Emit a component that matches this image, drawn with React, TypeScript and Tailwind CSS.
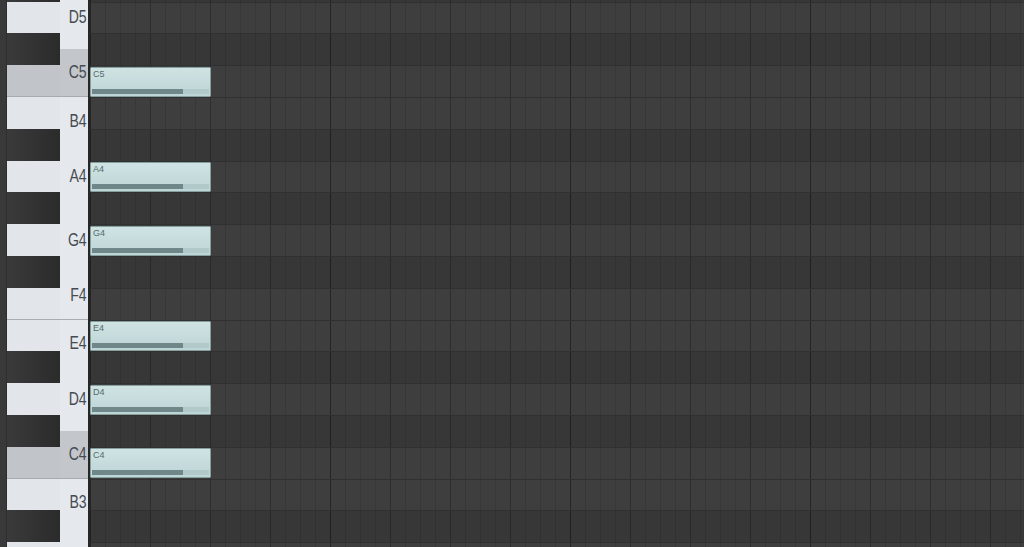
import React from "react";

const R = 31.8;
const rows = ["E5","D#5","D5","C#5","C5","B4","A#4","A4","G#4","G4","F#4","F4","E4","D#4","D4","C#4","C4","B3","A#3","A3"];
const whiteKeys = ["E5","D5","C5","B4","A4","G4","F4","E4","D4","C4","B3","A3"];
const hiddenLabels = new Set(["E5", "A3"]);
const notes = new Set(["C5","A4","G4","E4","D4","C4"]);

const isBlack = (n: string) => n.includes("#");
const isC = (n: string) => n.startsWith("C") && !n.includes("#");
const hasBottomLine = (n: string) => (n.startsWith("C") || n.startsWith("F")) && !n.includes("#");
const keyHeight = (n: string) => (n[0] === "D" || n[0] === "G" || n[0] === "A" ? 2 : 1.5) * R;

const gridBg =
  "bg-[image:linear-gradient(90deg,rgba(0,0,0,0.22)_0_1px,transparent_1px),linear-gradient(90deg,rgba(0,0,0,0.16)_0_1px,transparent_1px),linear-gradient(90deg,rgba(0,0,0,0.11)_0_1px,transparent_1px)] bg-[size:240px_100%,60px_100%,15px_100%]";

function Note({ name }: { name: string }) {
  return (
    <div className="w-[121px] h-[30px] mt-[0.5px] flex flex-col justify-between border border-[#86a0a0] rounded-[1px] bg-gradient-to-b from-[#cfe3e3] to-[#bed5d5] px-[1px] pt-[1px] pb-[2px]">
      <span className="text-[9px] leading-[10px] text-[#566a6c] pl-[1px]" style={{ fontFamily: '"Liberation Sans", Arial, sans-serif' }}>
        {name}
      </span>
      <div className="flex h-[5px]">
        <div className="w-[91px] h-full bg-[#6f8788]" />
        <div className="flex-1 h-full bg-[#b2c9c9]" />
      </div>
    </div>
  );
}

export default function App() {
  return (
    <div className="w-[1024px] h-[547px] overflow-hidden bg-[#3a3a3a]">
      <div className="flex mt-[-62px]">
        {/* left strip */}
        <div className="w-[7px] shrink-0 self-stretch bg-[#393939] border-r border-[#2e2e2e]" />
        {/* piano */}
        <div className="flex w-[81px] shrink-0">
          <div className="flex flex-col w-[53px]">
            {rows.map((n) => (
              <div
                key={n}
                className={
                  isBlack(n)
                    ? "bg-gradient-to-r from-[#3a3a3a] to-[#2b2b2b]"
                    : isC(n)
                    ? "bg-[#c1c4c8] border-b border-[#a7abb0]"
                    : hasBottomLine(n)
                    ? "bg-[#e2e5e9] border-b border-[#a9adb2]"
                    : "bg-[#e2e5e9]"
                }
                style={{ height: R }}
              />
            ))}
          </div>
          <div className="flex flex-col w-[28px]">
            {whiteKeys.map((n) => (
              <div
                key={n}
                className={
                  "flex items-center justify-end pr-[1px] " +
                  (isC(n)
                    ? "bg-[#c3c6ca] border-b border-[#a7abb0]"
                    : hasBottomLine(n)
                    ? "bg-[#e5e8ec] border-b border-[#a9adb2]"
                    : "bg-[#e5e8ec]")
                }
                style={{ height: keyHeight(n) }}
              >
                {!hiddenLabels.has(n) && (
                  <span
                    className="text-[18.5px] leading-none text-[#464b52] scale-x-[0.76] origin-right whitespace-nowrap"
                    style={{ fontFamily: '"Liberation Sans", Arial, sans-serif' }}
                  >
                    {n}
                  </span>
                )}
              </div>
            ))}
          </div>
        </div>
        <div className="w-[2px] shrink-0 self-stretch bg-[#262626]" />
        {/* grid */}
        <div className="flex flex-col flex-1">
          {rows.map((n) => (
            <div
              key={n}
              className={
                "flex items-start border-t border-[#303030] " +
                (isBlack(n) ? "bg-[#373737] " : "bg-[#3e3e3e] ") +
                gridBg
              }
              style={{ height: R }}
            >
              {notes.has(n) && <Note name={n} />}
            </div>
          ))}
        </div>
      </div>
    </div>
  );
}
